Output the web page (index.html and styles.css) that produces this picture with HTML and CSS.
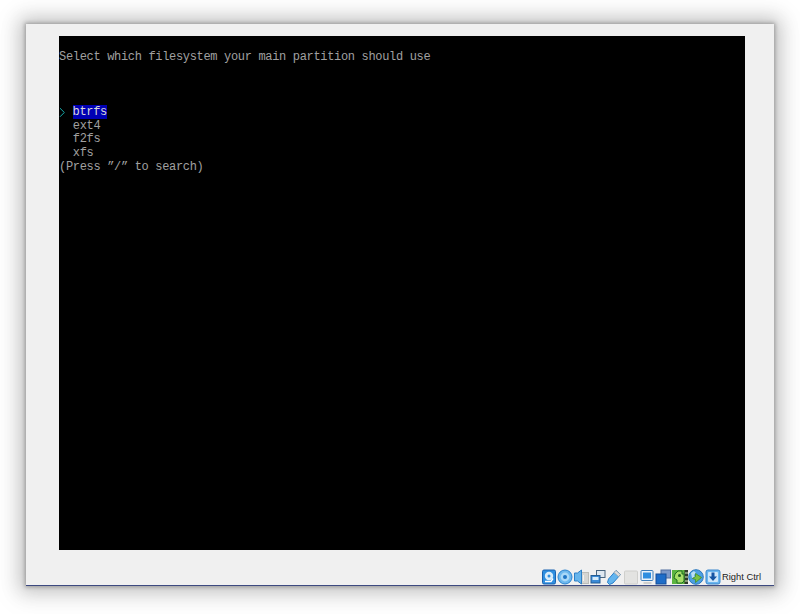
FILE: index.html
```html
<!DOCTYPE html>
<html lang="en">
<head>
<meta charset="utf-8">
<title>VirtualBox</title>
<link rel="stylesheet" href="styles.css">
</head>
<body>
<div class="window">
  <main class="screen">
    <div class="row"></div>
    <div class="row">Select which filesystem your main partition should use</div>
    <div class="row"></div>
    <div class="row"></div>
    <div class="row"></div>
    <div class="row"><svg class="cursor" viewBox="0 0 14 14"><path d="M1 3L5.500 7.500 1 12"/></svg><span class="selected">btrfs</span></div>
    <div class="row">  ext4</div>
    <div class="row">  f2fs</div>
    <div class="row">  xfs</div>
    <div class="row">(Press ”/” to search)</div>
  </main>
  <footer class="statusbar">
    <svg class="icon" viewBox="0 0 16 16"><rect x="1.500" y="1" width="13" height="14" rx="1.500" fill="#2f8fe0" stroke="#1a62b0"/><circle cx="8" cy="7" r="4.200" fill="#d8ecfa"/><circle cx="8" cy="7" r="1.500" fill="#2f8fe0"/><path d="M4 12.500h6l2-3" fill="none" stroke="#fff" stroke-width="1.400"/></svg>
    <svg class="icon" viewBox="0 0 16 16"><circle cx="8" cy="8" r="7" fill="#6db8ee" stroke="#2d84cf"/><circle cx="8" cy="8" r="4.400" fill="#a9d8f7"/><circle cx="8" cy="8" r="2" fill="#1f75c4"/></svg>
    <svg class="icon" viewBox="0 0 16 16"><rect x="8" y="3.500" width="7.500" height="11" fill="#d5d5d2" stroke="#bdbdb8"/><path d="M1.500 4h3l4-3v14l-4-3h-3z" fill="#67b5ec" stroke="#2d7fc6"/><path d="M10.500 6v6" stroke="#f2f2f0"/></svg>
    <svg class="icon" viewBox="0 0 16 16"><rect x="6.500" y="1.500" width="8.500" height="7" fill="#dfe8f0" stroke="#48657f"/><rect x="1" y="6.500" width="9" height="7.500" fill="#3a8ad6" stroke="#245d94"/><rect x="2.500" y="8" width="6" height="3" fill="#d5ebfa"/></svg>
    <svg class="icon" viewBox="0 0 16 16"><path d="M10 1.500l4.500 4-7.500 8.500-3.500 1.500-2-2 1-3.500z" fill="#62b4ee" stroke="#2a80c9"/><path d="M10 1.500l4.500 4-2 2-4.500-4z" fill="#dcdcdc" stroke="#9a9a9a" stroke-width=".6"/></svg>
    <svg class="icon" viewBox="0 0 16 16"><rect x="1.500" y="2" width="13" height="13" rx="1" fill="#e3e3e1" stroke="#cfcfcc"/></svg>
    <svg class="icon" viewBox="0 0 16 16"><rect x="2" y="1.500" width="12" height="10" rx="1" fill="#eaf3fa" stroke="#3c7cb8"/><rect x="4" y="3.500" width="8" height="6" fill="#2f8fe0"/><rect x="4.500" y="13" width="8" height="2" fill="#d0d0cd"/></svg>
    <svg class="icon" viewBox="0 0 16 16"><rect x="6" y="1" width="9.500" height="8" fill="#7c99c9" stroke="#506f9f"/><rect x="1" y="5" width="10" height="10" fill="#1e6dc8" stroke="#144f99"/></svg>
    <svg class="icon" viewBox="0 0 16 16"><rect x="0" y="1" width="16" height="14" fill="#5cb440"/><rect x="12.500" y="1" width="3.500" height="14" fill="#2e3a2a"/><path d="M3 5l3-3h4v3h2v7l-2 2H5v-3L2 9z" fill="#a6de68" stroke="#1f6e20"/><circle cx="7.500" cy="6.500" r="1.500" fill="#1f5e20"/><path d="M13 4h3M13 8h3M13 12h3" stroke="#d8f0c0"/></svg>
    <svg class="icon" viewBox="0 0 16 16"><circle cx="8" cy="8" r="7.300" fill="#4c9fe2" stroke="#2c78bd"/><path d="M3 4l3-2 2 2-2 2 1 2-3 1z" fill="#bcdff5"/><path d="M7.500 4.500l6 4-6 5v-3l-3-1 3-2z" fill="#7ac143" stroke="#3f8a1e" stroke-width=".7"/></svg>
    <svg class="icon" viewBox="0 0 16 16"><rect x="1" y="1" width="14" height="14" rx="2" fill="#6cb7f0" stroke="#3a86cc"/><rect x="3" y="3" width="10" height="10" rx="1" fill="#cfe7fa"/><path d="M6.500 3.500h3v4h2.500L8 12 4 7.500h2.500z" fill="#1655a3"/></svg>
    <span class="hostkey">Right Ctrl</span>
    <span class="grip"></span>
  </footer>
</div>
</body>
</html>
```
FILE: styles.css
```css
html, body {
  margin: 0;
  height: 100%;
  background: #fff;
  overflow: hidden;
}
body {
  padding: 24px 26px 28px;
  box-sizing: border-box;
}
.window {
  height: 562px;
  box-sizing: border-box;
  padding: 12px 29px 0 33px;
  background: #f0f0f0;
  border-bottom: 1px solid #3d4a80;
  box-shadow: 0 0 4px 1px #999, 0 0 18px 6px rgba(0, 0, 0, .2), 0 2px 26px 12px rgba(0, 0, 0, .05);
}
.screen {
  height: 514px;
  background: #000;
  color: #a0a0a0;
  font: 12px/15.75px "Liberation Mono", monospace;
  letter-spacing: -.325px;
}
.row {
  height: 13.75px;
  white-space: pre;
}
.cursor {
  display: inline-block;
  vertical-align: top;
  width: 13.500px;
  height: 14px;
  fill: none;
  stroke: #18b2b2;
}
.selected {
  display: inline-block;
  vertical-align: top;
  height: 13.75px;
  background: #0000b4;
  color: #d8d8d8;
}
.statusbar {
  position: relative;
  display: flex;
  align-items: center;
  justify-content: flex-end;
  gap: .4px;
  margin-right: -16px;
  padding-top: 19px;
}
.icon {
  width: 16px;
  height: 16px;
  flex: none;
}
.hostkey {
  margin-left: 1px;
  font: 9.400px/16px "Liberation Sans", sans-serif;
  color: #222;
}
.grip {
  position: absolute;
  right: -10px;
  bottom: 0;
  width: 4px;
  height: 4px;
  background: radial-gradient(circle, #b5b5b5 0 40%, transparent 45%) 0 0 / 2px 2px;
}
```
